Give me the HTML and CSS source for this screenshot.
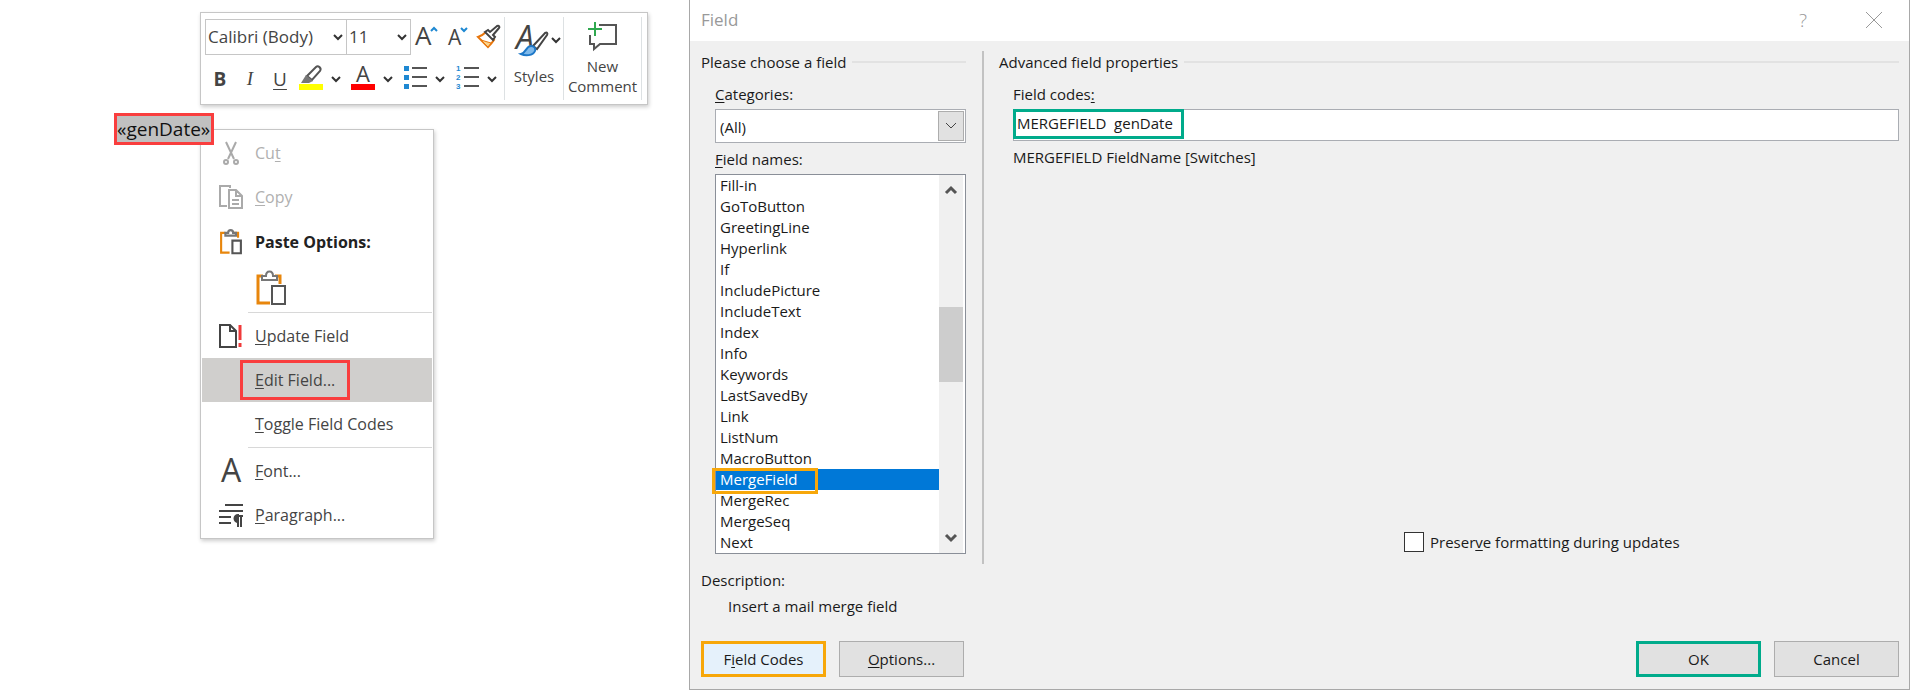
FILE: index.html
```html
<!DOCTYPE html>
<html lang="en">
<head>
  <meta charset="UTF-8">
  <meta name="viewport" content="width=device-width, initial-scale=1.0">
  <title>Edit merge field</title>
  <link rel="stylesheet" href="styles.css">
</head>
<body>
  <main class="document">
    <div class="merge-field">
      <span class="field-text">«genDate»</span>

      <!-- mini toolbar -->
      <div class="toolbar">
        <div class="format">
          <div class="format-row">
            <div class="combo font-name">
              <select aria-label="Font"><option>Calibri (Body)</option></select>
              <svg class="chevron" viewBox="0 0 10 6"><path d="M1 1l4 4 4-4"/></svg>
            </div>
            <div class="combo font-size">
              <select aria-label="Font size"><option>11</option></select>
              <svg class="chevron" viewBox="0 0 10 6"><path d="M1 1l4 4 4-4"/></svg>
            </div>
            <button class="tool" aria-label="Increase font size">
              <svg width="24" height="28" viewBox="0 0 24 28"><text x="0" y="22" class="letter" font-size="26">A</text><path d="M16 8l3-3 3 3" class="blue-line"/></svg>
            </button>
            <button class="tool" aria-label="Decrease font size">
              <svg width="24" height="28" viewBox="0 0 24 28"><text x="2" y="22" class="letter" font-size="21">A</text><path d="M15 5l3 3 3-3" class="blue-line"/></svg>
            </button>
            <button class="tool" aria-label="Format painter">
              <svg width="24" height="28" viewBox="0 0 24 28">
                <path d="M1 14c3-1 6-3 8-5l8 8c-2 3-4 5-6 7z" fill="#fff" stroke="#e8760c" stroke-width="2"/>
                <path d="M4 17l10 3-3 4z" fill="#fbd38a" stroke="#e8760c"/>
                <path d="M8 9l3-2 2 2 7-6c2-1 3 1 2 2l-6 7 2 2-2 3z" fill="#fff" stroke="#444" stroke-width="2"/>
              </svg>
            </button>
          </div>
          <div class="format-row styles-row">
            <button class="letter-btn bold">B</button>
            <button class="letter-btn italic">I</button>
            <button class="letter-btn underline">U</button>
            <button class="split" aria-label="Highlight">
              <svg width="24" height="28" viewBox="0 0 24 28">
                <path d="M8 11L17 2c2-2 6 1 4 4L13 15z" fill="#fff" stroke="#555" stroke-width="2"/>
                <path d="M7 10l7 6-4 2H2z" fill="#777"/>
                <path d="M0 19h24v6H0z" fill="#ff0"/>
              </svg>
              <svg class="chevron" viewBox="0 0 10 6"><path d="M1 1l4 4 4-4"/></svg>
            </button>
            <button class="split" aria-label="Font color">
              <svg width="24" height="28" viewBox="0 0 24 28"><text x="12" y="17" text-anchor="middle" class="letter" font-size="22">A</text><path d="M0 19h24v6H0z" fill="red"/></svg>
              <svg class="chevron" viewBox="0 0 10 6"><path d="M1 1l4 4 4-4"/></svg>
            </button>
            <button class="split" aria-label="Bullets">
              <svg width="24" height="28" viewBox="0 0 24 28">
                <path d="M1 1h5v5H1zM1 10h5v5H1zM1 19h5v5H1z" fill="#1e88d2"/>
                <path d="M9 3h15M9 12h15M9 21h15" class="dark-line"/>
              </svg>
              <svg class="chevron" viewBox="0 0 10 6"><path d="M1 1l4 4 4-4"/></svg>
            </button>
            <button class="split" aria-label="Numbering">
              <svg width="24" height="28" viewBox="0 0 24 28">
                <g class="numbers"><text x="1" y="6">1</text><text x="1" y="15">2</text><text x="1" y="24">3</text></g>
                <path d="M9 3h15M9 12h15M9 21h15" class="dark-line"/>
              </svg>
              <svg class="chevron" viewBox="0 0 10 6"><path d="M1 1l4 4 4-4"/></svg>
            </button>
          </div>
        </div>
        <button class="large styles">
          <span class="large-icon">
            <svg width="34" height="36" viewBox="0 0 34 36">
              <text x="1" y="27" class="letter slanted" font-size="32">A</text>
              <path d="M18 24L30 11c2-1 3 0 2 2L22 27z" fill="#fff" stroke="#444" stroke-width="2"/>
              <path d="M6 32c5-1 5-8 10-8 3 0 5 2 4 5-2 5-10 5-14 3z" fill="#7fb9ea" stroke="#1e78c8" stroke-width="2"/>
            </svg>
            <svg class="chevron" viewBox="0 0 10 6"><path d="M1 1l4 4 4-4"/></svg>
          </span>
          <span>Styles</span>
        </button>
        <button class="large comment">
          <svg width="32" height="30" viewBox="0 0 32 30">
            <path d="M12 4h17v19H13l-6 5v-5H3V14" fill="none" stroke="#555" stroke-width="2"/>
            <path d="M8 1v14M1 8h14" stroke="#2fa84f" stroke-width="2"/>
          </svg>
          <span>New<br>Comment</span>
        </button>
      </div>

      <!-- context menu -->
      <div class="menu" role="menu">
        <button class="item" role="menuitem" disabled>
          <svg width="24" height="24" viewBox="0 0 24 24" fill="none" stroke="#aaa" stroke-width="2">
            <path d="M7 1l8 17M17 1L9 18"/><circle cx="7" cy="21" r="2"/><circle cx="17" cy="21" r="2"/>
          </svg>
          <span>Cu<u>t</u></span>
        </button>
        <button class="item" role="menuitem" disabled>
          <svg width="24" height="24" viewBox="0 0 24 24" fill="none" stroke="#aaa" stroke-width="2">
            <path d="M11 3V1H1v20h7"/><path d="M10 5h7l6 6v12H10zM17 5v6h6M13 15h7M13 19h7"/>
          </svg>
          <span><u>C</u>opy</span>
        </button>
        <div class="item heading">
          <svg width="24" height="26" viewBox="0 0 34 36" fill="none" stroke-width="3">
            <path d="M9 5H3v28h12M21 5h6v7" stroke="#e8860c"/><path d="M9 9V5h4c0-5 7-5 7 0h4v4z" stroke="#777" fill="#fff"/><path d="M19 16h12v18H19z" stroke="#555" fill="#fff"/>
          </svg>
          <span>Paste Options:</span>
        </div>
        <button class="item paste" role="menuitem" aria-label="Keep source formatting">
          <svg width="34" height="36" viewBox="0 0 34 36" fill="none" stroke-width="2">
            <path d="M8 6H3v27h12M20 6h5v8" stroke="#e8860c" stroke-width="3"/><path d="M7 10V6h4c0-6 7-6 7 0h4v4z" stroke="#777" fill="#fff"/><path d="M17 16h13v18H17z" stroke="#555" fill="#fff"/>
          </svg>
        </button>
        <hr>
        <button class="item" role="menuitem">
          <svg width="24" height="26" viewBox="0 0 24 26" fill="none" stroke="#444" stroke-width="2">
            <path d="M1 2h10l6 6v16H1zM11 2v6h6"/><path d="M21 2v15M21 20v4" stroke="#f03a3a" stroke-width="3"/>
          </svg>
          <span><u>U</u>pdate Field</span>
        </button>
        <button class="item active" role="menuitem"><span class="marked"><u>E</u>dit Field...</span></button>
        <button class="item" role="menuitem"><span><u>T</u>oggle Field Codes</span></button>
        <hr>
        <button class="item" role="menuitem">
          <svg width="24" height="26" viewBox="0 0 24 26"><text x="12" y="24" text-anchor="middle" class="letter" font-size="32">A</text></svg>
          <span><u>F</u>ont...</span>
        </button>
        <button class="item" role="menuitem">
          <svg width="24" height="24" viewBox="0 0 24 24" fill="none" stroke="#444" stroke-width="2">
            <path d="M6 2h18M0 8h24M0 14h12M0 20h12"/><path d="M24 13h-6M19 13v11M22 13v11"/><path d="M19 12a3 3 0 0 0 0 7z" fill="#444"/>
          </svg>
          <span><u>P</u>aragraph...</span>
        </button>
      </div>
    </div>
  </main>

  <form class="dialog" role="dialog" aria-labelledby="dialog-title">
    <header class="titlebar">
      <span id="dialog-title">Field</span>
      <button type="button" class="help">?</button>
      <button type="button" class="close" aria-label="Close">
        <svg width="16" height="16" viewBox="0 0 16 16"><path d="M0 0l16 16M16 0L0 16"/></svg>
      </button>
    </header>

    <div class="panes">
      <section class="choose">
        <h2>Please choose a field</h2>
        <div class="group">
          <label for="categories"><u>C</u>ategories:</label>
          <div class="dropdown">
            <select id="categories"><option>(All)</option></select>
            <span class="arrow"><svg width="12" height="8" viewBox="0 0 12 8"><path d="M1 1l5 5 5-5"/></svg></span>
          </div>
          <label for="names"><u>F</u>ield names:</label>
          <div class="listbox">
            <select id="names" size="18">
              <option>Fill-in</option>
              <option>GoToButton</option>
              <option>GreetingLine</option>
              <option>Hyperlink</option>
              <option>If</option>
              <option>IncludePicture</option>
              <option>IncludeText</option>
              <option>Index</option>
              <option>Info</option>
              <option>Keywords</option>
              <option>LastSavedBy</option>
              <option>Link</option>
              <option>ListNum</option>
              <option>MacroButton</option>
              <option selected>MergeField</option>
              <option>MergeRec</option>
              <option>MergeSeq</option>
              <option>Next</option>
            </select>
            <div class="scrollbar">
              <svg width="12" height="9" viewBox="0 0 12 9"><path d="M1 8l5-5 5 5"/></svg>
              <span class="thumb"></span>
              <svg width="12" height="9" viewBox="0 0 12 9"><path d="M1 1l5 5 5-5"/></svg>
            </div>
            <span class="list-mark"></span>
          </div>
        </div>
      </section>

      <section class="properties">
        <h2>Advanced field properties</h2>
        <div class="group">
          <label for="codes">Field codes<u>:</u></label>
          <div class="codes">
            <input id="codes" type="text" value="MERGEFIELD  genDate">
            <span class="codes-mark"></span>
          </div>
          <p class="syntax">MERGEFIELD FieldName [Switches]</p>
        </div>
        <label class="preserve"><input type="checkbox"><span>Preser<u>v</u>e formatting during updates</span></label>
      </section>
    </div>

    <div class="description">
      <h3>Description:</h3>
      <p>Insert a mail merge field</p>
    </div>

    <footer class="actions">
      <button type="button" class="btn field-codes"><span>F<u>i</u>eld Codes</span></button>
      <button type="button" class="btn"><span><u>O</u>ptions...</span></button>
      <button type="button" class="btn ok">OK</button>
      <button type="button" class="btn">Cancel</button>
    </footer>
  </form>
</body>
</html>
```

FILE: styles.css
```css
* {
  box-sizing: border-box;
}

body {
  margin: 0;
  min-height: 100vh;
  display: flex;
  background: #fff;
  color: #1a1a1a;
  font: 15px/20px "Open Sans", "Noto Sans", sans-serif;
}

button, select, input {
  font: inherit;
  color: inherit;
}

button {
  padding: 0;
  border: 0;
  background: none;
}

select {
  appearance: none;
  border: 0;
  border-radius: 0;
  background: none;
}

h2, h3, p {
  margin: 0;
  font-size: 15px;
  font-weight: normal;
}

u {
  text-underline-offset: 2px;
}

svg {
  flex: none;
  overflow: visible;
}

/* document */
.document {
  flex: 0 0 689px;
  padding: 113px 0 0 114px;
}

.merge-field {
  position: relative;
  width: 100px;
  height: 32px;
}

.field-text {
  position: relative;
  z-index: 1;
  display: block;
  height: 32px;
  border: 3px solid #f93e3e;
  background: #c0c0c0;
  color: #111;
  font-size: 19px;
  line-height: 26px;
  white-space: nowrap;
}

.toolbar, .menu {
  position: absolute;
  left: 86px;
  border: 1px solid #c6c6c6;
  background: #fff;
  color: #444;
  box-shadow: 1px 2px 4px rgba(0, 0, 0, 0.2);
}

/* mini toolbar */
.toolbar {
  bottom: 40px;
  display: flex;
  width: 448px;
  height: 93px;
  padding: 4px;
}

.format {
  width: 299px;
  padding-top: 2px;
}

.format-row {
  display: flex;
  align-items: center;
  height: 36px;
}

.styles-row {
  height: 48px;
}

.combo {
  position: relative;
  height: 36px;
  border: 1px solid #c6c6c6;
}

.combo select {
  width: 100%;
  height: 34px;
  padding: 0 2px;
  font-size: 17px;
}

.font-name {
  width: 142px;
}

.font-size {
  width: 65px;
  margin-left: -1px;
}

.chevron {
  width: 10px;
  height: 6px;
  fill: none;
  stroke: #333;
  stroke-width: 2;
}

.combo .chevron {
  position: absolute;
  right: 3px;
  top: 14px;
}

.tool {
  width: 31px;
  height: 28px;
}

.letter {
  font-family: "Open Sans", sans-serif;
  fill: #444;
}

.slanted {
  font-style: italic;
}

.blue-line {
  fill: none;
  stroke: #1e88d2;
  stroke-width: 2;
}

.dark-line {
  stroke: #555;
  stroke-width: 2;
}

.numbers {
  fill: #1e88d2;
  font: bold 8px "Liberation Sans", sans-serif;
}

.letter-btn {
  width: 30px;
  font-size: 19px;
}

.bold {
  font-weight: bold;
}

.italic {
  font-family: "Liberation Serif", serif;
  font-style: italic;
}

.underline {
  text-decoration: underline;
  text-underline-offset: 3px;
}

.split {
  display: flex;
  align-items: center;
  gap: 8px;
  width: 52px;
  padding-left: 4px;
}

.large {
  display: flex;
  flex-direction: column;
  align-items: center;
  border-right: 1px solid #dde1e3;
  font-size: 15px;
}

.styles {
  width: 60px;
  padding-top: 5px;
  gap: 8px;
  border-left: 1px solid #dde1e3;
}

.large-icon {
  display: flex;
  align-items: center;
  gap: 2px;
  padding-left: 8px;
}

.comment {
  width: 78px;
  padding-top: 4px;
  gap: 5px;
}

/* context menu */
.menu {
  top: 16px;
  width: 234px;
  padding: 1px;
}

.item {
  display: flex;
  align-items: center;
  gap: 12px;
  width: 100%;
  height: 44px;
  padding-left: 17px;
  font-size: 16px;
}

.item span:first-child {
  margin-left: 36px;
}

.item:disabled {
  color: #b0b0b0;
}

.heading {
  height: 46px;
  color: #222;
  font-weight: bold;
}

.paste {
  height: 46px;
  padding-left: 53px;
}

.active {
  background: #d0cfcd;
}

.item .marked:first-child {
  margin-left: 21px;
  padding: 7px 12px;
  border: 3px solid #f93e3e;
}

.menu hr {
  margin: 1px 0 1px 46px;
  border: 0;
  border-top: 1px solid #d8d8d8;
}

/* dialog */
.dialog {
  flex: 1;
  display: flex;
  flex-direction: column;
  border: 1px solid #a8a8a8;
  border-top: 0;
  background: #f0f0f0;
}

.titlebar {
  display: flex;
  align-items: center;
  height: 41px;
  padding: 0 27px 2px 11px;
  background: #fff;
  color: #999;
  font-size: 17px;
}

.help {
  margin-left: auto;
  font-size: 19px;
  font-weight: 300;
}

.close {
  display: flex;
  margin-left: 59px;
}

.close path {
  stroke: #999;
}

.panes {
  display: flex;
  margin-top: 10px;
  padding: 0 10px 0 11px;
}

.choose {
  width: 283px;
  padding-right: 16px;
  border-right: 2px solid #c2c2c2;
}

.properties {
  flex: 1;
  padding-left: 15px;
}

h2 {
  display: flex;
  align-items: center;
  gap: 6px;
  padding-top: 1px;
}

h2::after {
  content: "";
  flex: 1;
  height: 2px;
  background: #e2e2e2;
}

.group {
  padding: 12px 0 0 14px;
}

.group label {
  display: block;
}

.dropdown {
  position: relative;
  height: 34px;
  margin: 5px 0 6px;
  border: 1px solid #aaadb3;
  background: #fff;
}

.dropdown select {
  width: 100%;
  height: 32px;
  padding: 2px 0 0 4px;
}

.arrow {
  position: absolute;
  top: 1px;
  right: 1px;
  bottom: 1px;
  display: grid;
  place-items: center;
  width: 26px;
  border: 1px solid #adadad;
  background: #e1e1e1;
  pointer-events: none;
}

.arrow path {
  fill: none;
  stroke: #444;
}

.listbox {
  position: relative;
  display: flex;
  height: 380px;
  margin-top: 5px;
  margin-bottom: 10px;
  border: 1px solid #8a8f98;
  background: #fff;
}

.listbox select {
  flex: 1;
  height: 378px;
  padding: 0;
  overflow: hidden;
  outline: 0;
}

.listbox option {
  height: 21px;
  min-height: 21px;
  padding: 0 4px;
  line-height: 21px;
}

.listbox option:checked {
  background: #0078d7 linear-gradient(#0078d7, #0078d7);
  color: #fff;
  -webkit-text-fill-color: #fff;
}

.scrollbar {
  display: flex;
  flex-direction: column;
  align-items: center;
  width: 26px;
  padding: 10px 0;
  border-right: 2px solid #fff;
  background: #f0f0f0;
}

.scrollbar path {
  fill: none;
  stroke: #555;
  stroke-width: 3;
}

.thumb {
  width: 24px;
  height: 75px;
  margin: 113px 0 auto;
  background: #cdcdcd;
}

.list-mark {
  position: absolute;
  top: 293px;
  left: -4px;
  width: 106px;
  height: 26px;
  border: 3px solid #f7a70a;
}

.codes {
  position: relative;
  margin: 5px 0 6px;
}

.codes input {
  display: block;
  width: 100%;
  height: 32px;
  padding: 0 3px 4px;
  border: 1px solid #aaadb3;
  background: #fff;
}

.codes-mark {
  position: absolute;
  top: 0;
  left: 0;
  width: 171px;
  height: 30px;
  border: 3px solid #00ab8b;
  pointer-events: none;
}

.preserve {
  display: flex;
  align-items: center;
  gap: 6px;
  margin: 365px 0 0 45%;
}

.preserve input {
  appearance: none;
  width: 20px;
  height: 20px;
  margin: 0;
  border: 1px solid #333;
  background: #fff;
}

.description {
  padding: 6px 11px;
}

.description p {
  padding: 6px 27px;
}

.actions {
  display: flex;
  gap: 13px;
  margin-top: auto;
  padding: 0 10px 12px 11px;
}

.btn {
  width: 125px;
  height: 36px;
  border: 1px solid #adadad;
  background: #e1e1e1;
}

.field-codes {
  border: 3px solid #f7a70a;
  background: #e5f1fb;
}

.ok {
  margin-left: auto;
  border: 3px solid #00ab8b;
}
```
